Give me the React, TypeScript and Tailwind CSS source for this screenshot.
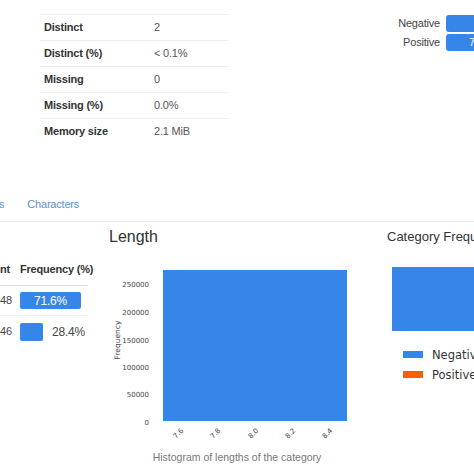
import React from "react";

const rows: [string, string][] = [
  ["Distinct", "2"],
  ["Distinct (%)", "< 0.1%"],
  ["Missing", "0"],
  ["Missing (%)", "0.0%"],
  ["Memory size", "2.1 MiB"],
];

const BLUE = "#3686ea";

function Histogram() {
  const yTicks: [string, number][] = [
    ["250000", 29],
    ["200000", 57],
    ["150000", 85],
    ["100000", 112],
    ["50000", 139],
    ["0", 167],
  ];
  const xTicks: [string, number][] = [
    ["7.6", 80],
    ["7.8", 117],
    ["8.0", 155],
    ["8.2", 192],
    ["8.4", 229],
  ];
  return (
    <svg width="260" height="219" viewBox="0 0 260 219" className="block">
      <rect x="63" y="15" width="184" height="151" fill={BLUE} />
      {yTicks.map(([t, y]) => (
        <text
          key={t}
          x="49"
          y={y + 2.5}
          textAnchor="end"
          fontSize="7"
          fill="#444"
          fontFamily="DejaVu Sans, sans-serif"
        >
          {t}
        </text>
      ))}
      <text
        x="0"
        y="0"
        transform="translate(20 85) rotate(-90)"
        textAnchor="middle"
        fontSize="7.5"
        fill="#444"
        fontFamily="DejaVu Sans, sans-serif"
      >
        Frequency
      </text>
      {xTicks.map(([t, x]) => (
        <text
          key={t}
          x="0"
          y="0"
          transform={`translate(${x} 180) rotate(-45)`}
          textAnchor="middle"
          fontSize="7"
          fill="#444"
          fontFamily="DejaVu Sans, sans-serif"
        >
          {t}
        </text>
      ))}
      <text
        x="137"
        y="206"
        textAnchor="middle"
        fontSize="10.5"
        fill="#777"
        fontFamily="Liberation Sans, Arial, sans-serif"
      >
        Histogram of lengths of the category
      </text>
    </svg>
  );
}

function CategoryChart() {
  return (
    <svg width="114" height="140" viewBox="0 0 114 140" className="block">
      <rect x="32" y="14" width="90" height="64" fill={BLUE} />
      <rect x="43" y="98" width="20" height="7" fill={BLUE} />
      <text x="72" y="106" fontSize="11.5" fill="#333" fontFamily="DejaVu Sans, sans-serif">
        Negative
      </text>
      <rect x="43" y="118" width="20" height="7" fill="#ff5c0a" />
      <text x="72" y="126" fontSize="11.5" fill="#333" fontFamily="DejaVu Sans, sans-serif">
        Positive
      </text>
    </svg>
  );
}

export default function App() {
  return (
    <div
      className="w-[474px] h-[474px] overflow-hidden bg-white text-[#333]"
      style={{ fontFamily: "'Liberation Sans', Arial, sans-serif" }}
    >
      {/* top section */}
      <div className="flex h-[190px]">
        <div className="ml-[40px] mt-[14px] w-[188px]">
          {rows.map(([k, v]) => (
            <div
              key={k}
              className="flex h-[26px] items-center border-t border-[#eeeeee] text-[11px] tracking-[-0.2px]"
            >
              <div className="w-[114px] pl-[4px] font-bold text-[#333]">{k}</div>
              <div className="text-[#555]">{v}</div>
            </div>
          ))}
        </div>
        <div className="ml-auto mt-[15px] flex flex-col gap-[2px]">
          <div className="flex items-center gap-[6px]">
            <span className="w-[160px] text-right text-[11px] tracking-[-0.2px] text-[#444]">Negative</span>
            <div className="h-[17px] w-[28px] rounded-l-[3px] bg-[#3686ea]" />
          </div>
          <div className="flex items-center gap-[6px]">
            <span className="w-[160px] text-right text-[11px] tracking-[-0.2px] text-[#444]">Positive</span>
            <div className="h-[17px] w-[28px] rounded-l-[3px] bg-[#3686ea] pl-[23px] text-[11px] leading-[17px] text-white">
              7
            </div>
          </div>
        </div>
      </div>

      {/* tabs */}
      <div className="flex h-[32px] items-start border-b border-[#eeeeee] pt-[6px] text-[11px] tracking-[-0.2px] text-[#5c92cf]">
        <span className="-ml-[1px]">s</span>
        <span className="ml-[23px]">Characters</span>
      </div>

      {/* bottom */}
      <div className="flex">
        <div className="w-[100px] shrink-0 pt-[36px] text-[11px] tracking-[-0.2px]">
          <div className="flex h-[28px] w-[88px] items-start whitespace-nowrap border-b border-[#dddddd] pt-[3px] font-bold">
            <span className="w-[20px] shrink-0">nt</span>
            <span className="shrink-0">Frequency (%)</span>
          </div>
          <div className="flex h-[30px] w-[88px] items-center border-b border-[#eeeeee]">
            <span className="w-[20px] shrink-0 text-[#444]">48</span>
            <div className="flex h-[17px] w-[61px] items-center justify-center rounded-[2px] bg-[#3686ea] text-[12px] text-white">
              71.6%
            </div>
          </div>
          <div className="flex h-[31px] w-[88px] items-center">
            <span className="w-[20px] shrink-0 text-[#444]">46</span>
            <div className="h-[18px] w-[23px] rounded-[2px] bg-[#3686ea]" />
            <span className="ml-[9px] text-[12px] text-[#444]">28.4%</span>
          </div>
        </div>

        <div className="w-[260px] shrink-0">
          <div className="h-[33px] pl-[9px] pt-[5px] text-[16px] leading-[20px] text-[#333]">
            Length
          </div>
          <Histogram />
        </div>

        <div className="w-[114px] shrink-0">
          <div className="h-[31px] whitespace-nowrap pl-[27px] pt-[6px] text-[13px] leading-[18px] text-[#333]">
            Category Frequency
          </div>
          <CategoryChart />
        </div>
      </div>
    </div>
  );
}
